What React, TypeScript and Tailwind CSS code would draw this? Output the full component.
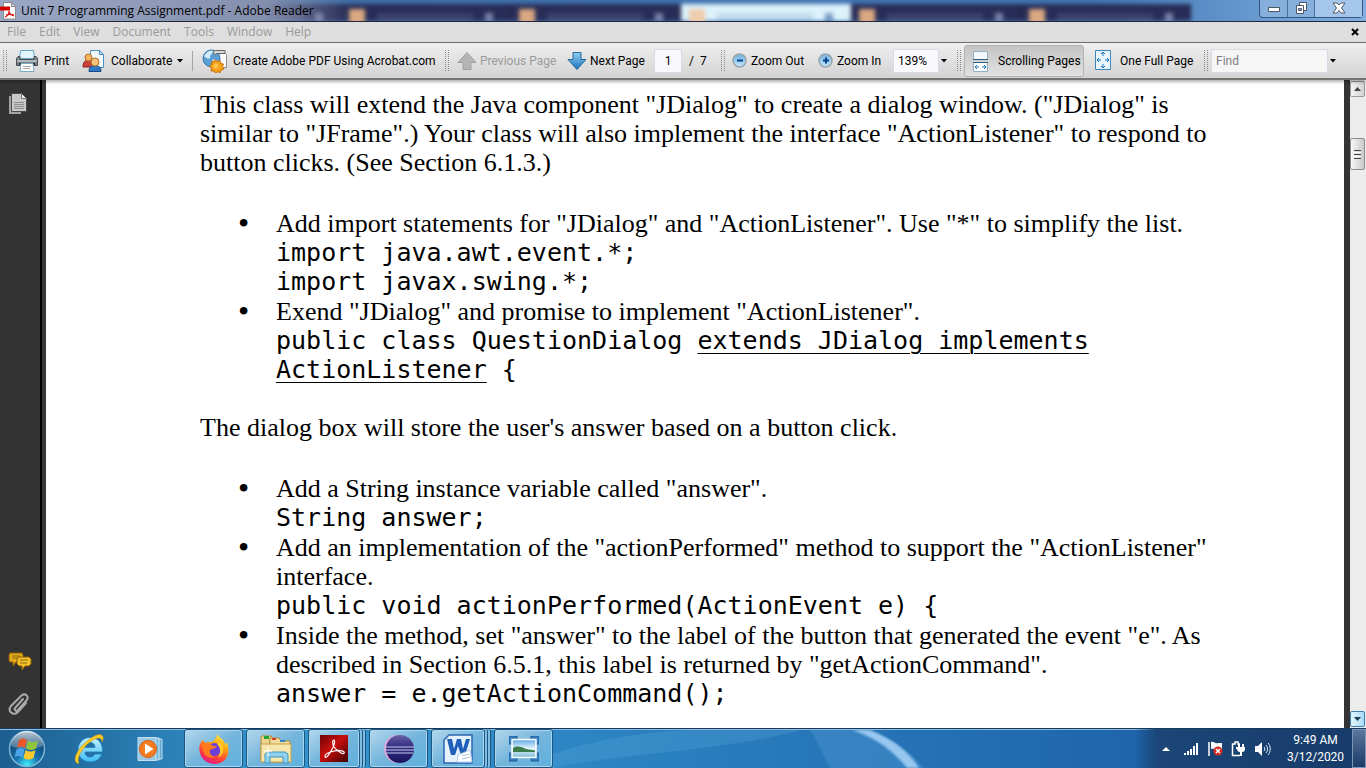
import type { ReactNode } from "react";

function Grip() {
  return (
    <svg width="4" height="22" className="shrink-0" aria-hidden="true">
      {Array.from({ length: 11 }, (_, i) => (
        <g key={i} fill="#8a8a8a">
          <rect x="0" y={i * 2} width="1" height="1" />
          <rect x="3" y={i * 2} width="1" height="1" />
        </g>
      ))}
    </svg>
  );
}

function Caret() {
  return (
    <svg width="6" height="4" className="shrink-0" aria-hidden="true">
      <path d="M0 0h6L3 3.5z" fill="#000" />
    </svg>
  );
}

function PdfIcon() {
  return (
    <svg width="16" height="18" viewBox="0 0 16 18" aria-hidden="true">
      <path d="M3.500.500h8l4 4v12.500h-12z" fill="#fff" stroke="#8a8a8a" />
      <path d="M11.500.500v4h4z" fill="#ddd" stroke="#8a8a8a" />
      <path d="M0 4.500h10v4H0z" fill="#d40000" />
      <path d="M5 15c3-1 4-4 4-6M9 9c0 3 2 4 5 5M6 13c3-1 5-1 8 0" fill="none" stroke="#e01010" strokeWidth="1.200" />
    </svg>
  );
}

function PrintIcon() {
  return (
    <svg width="24" height="24" viewBox="0 0 24 24" aria-hidden="true">
      <path d="M5.500 1.500h13l1 8h-15z" fill="#e3f5fc" stroke="#68a6bf" />
      <path d="M3 7.500h2v3h14v-3h2l1.500 2v7h-21v-7z" fill="#7b838a" stroke="#464c52" />
      <path d="M2 11h20v2H2z" fill="#b3babf" />
      <path d="M4 14h16v2H4z" fill="#22272b" />
      <path d="M6 14.500h12l1 8H5z" fill="#fff" stroke="#7babc4" />
      <path d="M8 17.500h8M8 19.500h7" stroke="#a5a5a5" />
    </svg>
  );
}

function CollaborateIcon() {
  return (
    <svg width="24" height="24" viewBox="0 0 24 24" aria-hidden="true">
      <path d="M8.500 1.500h9l4 4v13h-13z" fill="#f4fbff" stroke="#4b8fc0" />
      <path d="M17.500 1.500v4h4z" fill="#b9ddf1" stroke="#4b8fc0" />
      <path d="M1 18c0-5 2-7 6-7s6 2 6 7z" fill="#c9403a" stroke="#8c2320" />
      <circle cx="6.500" cy="8.500" r="3.500" fill="#f3b563" stroke="#b27020" />
      <path d="M7 22.500c0-4 2-6 6-6s6 2 6 6z" fill="#2f79c4" stroke="#174c8b" />
      <circle cx="13" cy="13" r="4" fill="#f6c37b" stroke="#b27020" />
    </svg>
  );
}

function CreatePdfIcon() {
  return (
    <svg width="26" height="24" viewBox="0 0 26 24" aria-hidden="true">
      <path d="M9.500 2.500h12l3 3v13h-15z" fill="#fafafa" stroke="#8d8d8d" />
      <circle cx="9.500" cy="9.500" r="8.500" fill="#5b9fd4" stroke="#3571a8" />
      <path d="M2 7c3-5 6-6 9-5 0 3-3 3-3 6s-3 2-6-1zM10 11c3-1 5 0 7 2l-5 5c-3-2-2-4-2-7z" fill="#d4ecf9" />
      <path d="M11 4c0-2 2-2.500 4-2.500h8v3h-8c-1 0-1 1-2 1z" fill="#d9d9d9" stroke="#666" />
      <path
        d="m13.500 10.500 1.800 2.300 2.700-1.200.6 2.900 2.900.5-1 2.500 1.500 2.500-3 .8-.5 2.700-2.700-.8-2.300 1.600-1.500-2.400-3 .1.500-2.900-2-2 2.300-1.800v-3h3z"
        fill="#f6a21a"
        stroke="#c66b08"
      />
      <circle cx="14" cy="17" r="2.500" fill="#fdc34a" />
    </svg>
  );
}

function ArrowIcon({ down = false }: { down?: boolean }) {
  return (
    <svg width="20" height="20" viewBox="0 0 20 20" aria-hidden="true">
      <defs>
        <linearGradient id="arrowBlue" x1="0" y1="0" x2="0" y2="1">
          <stop offset="0" stopColor="#8fcdf0" />
          <stop offset="1" stopColor="#1c72bb" />
        </linearGradient>
      </defs>
      {down ? (
        <path d="M6 1.500h8v7h5L10 18.500 1 8.500h5z" fill="url(#arrowBlue)" stroke="#27699f" />
      ) : (
        <path d="M6 18.500h8v-7h5L10 1.500 1 11.500h5z" fill="#b5b5b5" stroke="#a0a0a0" />
      )}
    </svg>
  );
}

function ZoomIcon({ plus = false }: { plus?: boolean }) {
  return (
    <svg width="16" height="16" viewBox="0 0 16 16" aria-hidden="true">
      <defs>
        <linearGradient id="lens" x1="0" y1="0" x2="0" y2="1">
          <stop offset="0" stopColor="#6fb2e0" />
          <stop offset="1" stopColor="#c4e9fb" />
        </linearGradient>
      </defs>
      <circle cx="7.500" cy="7.500" r="6.500" fill="url(#lens)" stroke="#9aa4ac" strokeWidth="1.500" />
      <path d={plus ? "M5 7.500h6M8 4.500v6" : "M5 7.500h6"} stroke="#07428b" strokeWidth="2" />
    </svg>
  );
}

function ScrollingIcon() {
  return (
    <svg width="18" height="22" viewBox="0 0 18 22" aria-hidden="true">
      <path d="M1.500 1.500h14v8h-14z" fill="#f2f8fc" stroke="#8fb0c6" />
      <path d="M1 9.500h15" stroke="#2f5d80" />
      <path d="M1.500 12.500h14v9h-14z" fill="#fff" stroke="#8fb0c6" />
      <path d="M1 12.500h15" stroke="#2f5d80" />
      <path d="M3 17h4M10 17h4M5 15l-2 2 2 2M12 15l2 2-2 2" fill="none" stroke="#1e79ba" />
    </svg>
  );
}

function FullPageIcon() {
  return (
    <svg width="17" height="21" viewBox="0 0 17 21" aria-hidden="true">
      <path d="M.500.500h15v19H.500z" fill="#e6f5fd" stroke="#3f86b5" />
      <path d="M8 2v4M6 4l2-2 2 2M8 18v-4M6 16l2 2 2-2M2 10h4M4 8l-2 2 2 2M14 10h-4M12 8l2 2-2 2" fill="none" stroke="#1873b6" />
    </svg>
  );
}

function PagesIcon() {
  return (
    <svg width="20" height="24" viewBox="0 0 20 24" aria-hidden="true">
      <path d="M1 4h12v18H1z" fill="#a3a3a3" />
      <path d="M3.500 1.500h10l5 5v13h-15z" fill="#c9c9c9" stroke="#4a4a4a" />
      <path d="M13.500 1.500v5h5z" fill="#eee" stroke="#777" />
      <path d="M6 10.500h10M6 12.500h10M6 14.500h10M6 16.500h10" stroke="#8c8c8c" />
    </svg>
  );
}

function CommentsIcon() {
  return (
    <svg width="24" height="20" viewBox="0 0 24 20" aria-hidden="true">
      <path d="M2 1h12l1 2v6l-1 1H8l-3 4v-4H2L1 9V3z" fill="#e6a91c" stroke="#8b5c08" />
      <path d="M4 4h8M4 6h6" stroke="#8b6a10" />
      <path d="M11 5h10l2 2v5l-2 2h-4l-3 4v-4h-3l-2-2V7z" fill="#f2c12b" stroke="#8b5c08" />
      <path d="M12 8h8M12 11h7" stroke="#8b6a10" />
    </svg>
  );
}

function ClipIcon() {
  return (
    <svg width="22" height="24" viewBox="0 0 22 24" aria-hidden="true">
      <path
        d="m15 7-8 9c-1 2 1 4 3 2l8.500-9.500c3-4-1-8-5-5L3 14c-4 5 2 10 6.500 6.500L18 11"
        fill="none"
        stroke="#aaa"
        strokeWidth="2"
        strokeLinecap="round"
      />
    </svg>
  );
}

function StartOrb() {
  return (
    <svg width="38" height="38" viewBox="0 0 38 38" aria-hidden="true">
      <defs>
        <radialGradient id="orb" cx=".5" cy=".95" r=".85">
          <stop offset="0" stopColor="#3ff0ff" />
          <stop offset=".4" stopColor="#1672ac" />
          <stop offset="1" stopColor="#123c67" />
        </radialGradient>
        <linearGradient id="orbShine" x1="0" y1="0" x2="0" y2="1">
          <stop offset="0" stopColor="#fff" stopOpacity=".75" />
          <stop offset="1" stopColor="#9bb8cc" stopOpacity=".35" />
        </linearGradient>
      </defs>
      <circle cx="19" cy="19" r="17.500" fill="url(#orb)" stroke="#7db4d4" strokeWidth="1.500" />
      <path d="M3 16a16 15 0 0 1 32 0c-9 4-23 4-32 0z" fill="url(#orbShine)" />
      <path d="M11 10c3-2 5-2 8 0l-2 8c-3-2-5-2-8 0z" fill="#e8562a" />
      <path d="M20 10.500c3 2 6 2 10 0l-2 8c-4 2-7 2-10 0z" fill="#8fc43c" />
      <path d="M8.500 19.500c3-2 5-2 8 0l-2 8c-3-2-5-2-8 0z" fill="#4aa3e6" />
      <path d="M17.500 20c3 2 6 2 10 0l-2 8c-4 2-7 2-10 0z" fill="#fcc92d" />
    </svg>
  );
}

function IeIcon() {
  return (
    <svg width="32" height="32" viewBox="0 0 32 32" aria-hidden="true">
      <defs>
        <linearGradient id="ie" x1="0" y1="0" x2="0" y2="1">
          <stop offset="0" stopColor="#c4f3ff" />
          <stop offset="1" stopColor="#3dbcf3" />
        </linearGradient>
      </defs>
      <path
        d="M17 4.500C10 4.500 5 10 5 17s5 12 12 12c6 0 10-3 12-8h-7c-1 2-3 3-5 3-3 0-5-2-5-5h17.500c.500-9-4.500-14.500-12.500-14.500zM12 14.500c0-3 2-5 5-5s5 2 5 5z"
        fill="url(#ie)"
        stroke="#1b7cba"
        strokeWidth=".8"
        fillRule="evenodd"
      />
      <path
        d="M6 30.500c-6 0-5-9 3-17.500S26-.500 29 2.500c2 1.500 1 4.500 0 6.500 0-5.500-5-5-12 0S3 24 6 30.500z"
        fill="#fbd02a"
        stroke="#c38d0c"
        strokeWidth=".6"
      />
    </svg>
  );
}

function PlayerIcon() {
  return (
    <svg width="28" height="26" viewBox="0 0 28 26" aria-hidden="true">
      <path d="M21 3h4v20h-4z" fill="#5fa9d6" stroke="#c3e2f2" />
      <path d="M18 2h4v22h-4z" fill="#6fb2da" stroke="#d5edf8" />
      <path d="M1 1.500h18v23H1z" fill="#9ac6e2" stroke="#c3e2f2" />
      <circle cx="11" cy="13" r="8.500" fill="#f47b1f" stroke="#d95d0b" />
      <path d="m8 7.500 8.500 5.500L8 18.500z" fill="#fff" />
    </svg>
  );
}

function FirefoxIcon() {
  return (
    <svg width="32" height="32" viewBox="0 0 32 32" aria-hidden="true">
      <defs>
        <linearGradient id="fox" x1=".8" y1="0" x2=".3" y2="1">
          <stop offset="0" stopColor="#fff44f" />
          <stop offset=".35" stopColor="#ffa70e" />
          <stop offset=".7" stopColor="#ff4139" />
          <stop offset="1" stopColor="#e31587" />
        </linearGradient>
      </defs>
      <path
        d="M20 1c1 3 2 4 4 5 2 2 3 4 3 6l2-3c3 9 2 21-12 22C6 31-1 21 2 11l3-5c0 2 1 3 2 4 2-1 4-1 7-1 2-1 4-4 6-8z"
        fill="url(#fox)"
      />
      <circle cx="16.500" cy="16.500" r="6.500" fill="#6e3fd8" />
      <path d="M4 10c4-1 8 0 11 3h4c-1 2-5 3-7 4-1 5 3 7 6 7-7 2-12-1-13-6-1-3-1-6-1-8z" fill="#ff7a1c" />
      <path d="M22 9c2 2 4 5 3 10-1 3-3 5-5 6 3-5 3-10-1-14z" fill="#ffcb2d" />
    </svg>
  );
}

function ExplorerIcon() {
  return (
    <svg width="34" height="30" viewBox="0 0 34 30" aria-hidden="true">
      <path d="M3 2h9l2 3h6v22H2V3z" fill="#ecd48a" stroke="#b08b34" />
      <path d="M5 2h5v3H5z" fill="#20a53a" />
      <path d="M11 4h9l2 3h9v21H10z" fill="#f3dd98" stroke="#b08b34" />
      <path d="M13 4h4v2h-4z" fill="#d0402b" />
      <path d="M21 6h5v2h-5z" fill="#2e83cf" />
      <path d="M2 10h30v18H2z" fill="#f8e7ac" stroke="#c2a04c" />
      <path d="M6 29v-9l3-2h17l3 2v9h-5v-6H11v6z" fill="#8fd0ef" stroke="#4496bf" />
      <path d="M9 13v9M5 17h8" stroke="#fff" />
    </svg>
  );
}

function AcrobatIcon() {
  return (
    <svg width="28" height="27" viewBox="0 0 28 27" aria-hidden="true">
      <defs>
        <linearGradient id="acro" x1="0" y1="0" x2="1" y2="1">
          <stop offset="0" stopColor="#6d0404" />
          <stop offset=".45" stopColor="#c90d0d" />
          <stop offset="1" stopColor="#3d0202" />
        </linearGradient>
      </defs>
      <path d="M0 0h28v27H0z" fill="url(#acro)" />
      <path
        d="M14 5c-2 0-1.500 4 0 7 2 3 5 5 8 6.500 2 .5 3-1 1.500-2-3-1.500-9-1-13 .500-3 1-5.500 3-5.500 4.500s2 1 3.500-1.500c2.500-4 5.500-8 6-12 0-2 0-3-.5-3z"
        fill="none"
        stroke="#fff"
        strokeWidth="1.200"
      />
    </svg>
  );
}

function EclipseIcon() {
  return (
    <svg width="32" height="30" viewBox="0 0 32 30" aria-hidden="true">
      <defs>
        <linearGradient id="ecl" x1="0" y1="0" x2="0" y2="1">
          <stop offset="0" stopColor="#6961a8" />
          <stop offset=".4" stopColor="#362e80" />
          <stop offset="1" stopColor="#1c1560" />
        </linearGradient>
      </defs>
      <circle cx="15" cy="15" r="14" fill="#e0a6d8" />
      <circle cx="17" cy="15" r="14" fill="url(#ecl)" />
      <path d="M2 13h29M2 16h29M3 19h27" stroke="#c5cdf0" strokeWidth="1" />
    </svg>
  );
}

function WordIcon() {
  return (
    <svg width="30" height="30" viewBox="0 0 30 30" aria-hidden="true">
      <path d="M6 1h23v28H1V6z" fill="#e4f0fb" stroke="#2b66b4" strokeWidth="1.500" />
      <path d="M4 5h5l2 10 3-10h4l2 10 3-10h4l-5 16h-4l-3-9-3 9H8z" fill="#1d5fb9" />
      <path d="m15 21 12-5 2 12H14z" fill="#fff" stroke="#b6cbe4" />
      <path d="m19 22 7-2M19 25l8-2" stroke="#a5bfe0" />
    </svg>
  );
}

function PictureIcon() {
  return (
    <svg width="30" height="26" viewBox="0 0 30 26" aria-hidden="true">
      <defs>
        <linearGradient id="sky" x1="0" y1="0" x2="0" y2="1">
          <stop offset="0" stopColor="#5ca9e8" />
          <stop offset=".5" stopColor="#e4f3fb" />
          <stop offset="1" stopColor="#7fbcd6" />
        </linearGradient>
      </defs>
      <path d="M0 0h8v3H3v5H0zM30 0h-8v3h5v5h3zM0 25h8v-3H3v-5H0zM30 25h-8v-3h5v-5h3z" fill="#3480c3" stroke="#1d5d97" />
      <path d="M3 3.500h24v18H3z" fill="url(#sky)" stroke="#fff" strokeWidth="1.500" />
      <path d="M4 12c4-3 9-1 13 1l9 1.500V16H4z" fill="#3b7d4a" />
    </svg>
  );
}

const tabs = [false, false, false, true, false, false];

function TitleBar() {
  return (
    <header className="relative flex h-[22px] shrink-0 items-center overflow-hidden border-b border-[#23263c] bg-gradient-to-r from-[#3f6ea5] via-[#4377b4] via-80% to-[#7fb0e0]">
      <div className="absolute inset-0 flex pt-1 blur-[2px]" aria-hidden="true">
        <div className="w-[171px] bg-[#2a3058]" />
        {tabs.map((active, i) => (
          <div
            key={i}
            className={
              active
                ? "flex w-[170px] items-center gap-3 bg-[#dcf2fb] px-2 pt-2"
                : "flex w-[170px] items-center gap-3 border-r border-[#1d2142] bg-[#282d57] px-2 pt-2"
            }
          >
            <span className={active ? "h-4 w-4 bg-[#f0cdae]" : "h-4 w-4 bg-[#d9a781]"} />
            <span className={active ? "h-2 w-24 bg-[#c3dcee]" : "h-2 w-24 bg-[#3b416b]"} />
            <span className={active ? "h-2 w-2 bg-[#7d9dc4]" : "h-2 w-2 bg-[#7b82a6]"} />
          </div>
        ))}
      </div>
      <div
        className="absolute inset-y-0 left-0 w-[350px] bg-gradient-to-r from-[#9aa7c4] via-[#8590ae] via-75% to-transparent"
        aria-hidden="true"
      />
      <div className="relative flex items-center gap-[5px]">
        <PdfIcon />
        <h1 className="text-xs whitespace-nowrap text-black">Unit 7 Programming Assignment.pdf - Adobe Reader</h1>
      </div>
      <div className="relative mr-[3px] mb-1 ml-auto flex h-[18px] rounded-b border border-t-0 border-[#33557f] bg-[#86afdb]">
        <button aria-label="Minimize" className="flex w-7 items-center justify-center border-r border-[#4a6f9c] pt-1">
          <svg width="12" height="6" aria-hidden="true">
            <path d="M.5.5h11v4H.5z" fill="#fff" stroke="#4b5666" />
          </svg>
        </button>
        <button aria-label="Restore" className="flex w-[27px] items-center justify-center border-r border-[#4a6f9c]">
          <svg width="13" height="12" viewBox="0 0 13 12" aria-hidden="true">
            <path d="M4.500.500h7v8h-7z" fill="#fff" stroke="#4b5666" />
            <path d="M1.500 3.500h7v8h-7z" fill="#fff" stroke="#4b5666" />
            <path d="M3.500 6.500h3v2h-3z" fill="#86afdb" stroke="#4b5666" />
          </svg>
        </button>
        <button aria-label="Close" className="flex w-[47px] items-center justify-center bg-[#a4c6ea]">
          <svg width="14" height="12" viewBox="0 0 14 12" aria-hidden="true">
            <path d="M1 1h4l2 2 2-2h4L9.500 6l3.500 5H9L7 8.500 5 11H1l3.500-5z" fill="#fff" stroke="#4b5666" />
          </svg>
        </button>
      </div>
    </header>
  );
}

function MenuBar() {
  return (
    <nav className="flex h-5 shrink-0 items-center gap-[13px] bg-[#dedede] pr-1 pl-[7px] text-xs text-[#9a9a9a]">
      <button>File</button>
      <button>Edit</button>
      <button>View</button>
      <button>Document</button>
      <button>Tools</button>
      <button>Window</button>
      <button>Help</button>
      <button aria-label="Close document" className="mr-[3px] ml-auto">
        <svg width="8" height="8" viewBox="0 0 8 8" aria-hidden="true">
          <path d="m1 1 6 6M7 1 1 7" stroke="#000" strokeWidth="2" />
        </svg>
      </button>
    </nav>
  );
}

function Tool({ icon, label, className }: { icon: ReactNode; label: string; className: string }) {
  return (
    <button className={`flex h-8 shrink-0 items-center whitespace-nowrap ${className}`}>
      {icon}
      {label}
    </button>
  );
}

function Toolbar() {
  return (
    <div className="z-10 flex h-[38px] shrink-0 items-center border-t border-b-2 border-t-[#6e6e6e] border-b-[#737373] bg-gradient-to-b from-[#efefef] to-[#d3d3d3] pl-[3px] font-[Roboto,sans-serif] text-xs text-black shadow-[0_2px_3px_rgba(0,0,0,0.3)]">
      <Grip />
      <Tool icon={<PrintIcon />} label="Print" className="ml-2 w-[67px] gap-[5px]" />
      <button className="flex h-8 w-[110px] shrink-0 items-center gap-[5px]">
        <CollaborateIcon />
        Collaborate
        <Caret />
      </button>
      <div className="h-5 w-px shrink-0 bg-[#a5a5a5]" />
      <Tool icon={<CreatePdfIcon />} label="Create Adobe PDF Using Acrobat.com" className="ml-[9px] w-[243px] gap-[5px]" />
      <Grip />
      <Tool icon={<ArrowIcon />} label="Previous Page" className="ml-2 w-[110px] gap-[3px] text-[#9b9b9b]" />
      <Tool icon={<ArrowIcon down />} label="Next Page" className="w-[87px] gap-[3px]" />
      <input
        aria-label="Page number"
        defaultValue="1"
        className="h-6 w-7 shrink-0 border border-[#d8dbe6] bg-[#f9f9fb] text-center"
      />
      <span className="ml-[7px] w-[32px] shrink-0 whitespace-pre">/  7</span>
      <Grip />
      <Tool icon={<ZoomIcon />} label="Zoom Out" className="ml-[7px] w-[86px] gap-[3px]" />
      <Tool icon={<ZoomIcon plus />} label="Zoom In" className="w-[75px] gap-[3px]" />
      <input
        aria-label="Zoom level"
        defaultValue="139%"
        className="h-6 w-[46px] shrink-0 border border-[#d8dbe6] bg-[#f9f9fb] pl-1"
      />
      <button aria-label="Zoom presets" className="flex h-6 w-[18px] shrink-0 items-center pl-[2px]">
        <Caret />
      </button>
      <Grip />
      <Tool
        icon={<ScrollingIcon />}
        label="Scrolling Pages"
        className="ml-[3px] w-[120px] gap-2 rounded-[3px] border border-[#b2b2b2] bg-gradient-to-b from-[#c4c4c4] to-[#e2e2e2] pl-[7px]"
      />
      <Tool icon={<FullPageIcon />} label="One Full Page" className="ml-[11px] w-[109px] gap-2" />
      <Grip />
      <input
        aria-label="Find"
        placeholder="Find"
        className="ml-[3px] h-6 w-[117px] shrink-0 border border-[#d8dbe6] bg-[#f6f6f6] pl-1 placeholder:text-[#7c7c7c]"
      />
      <button aria-label="Find options" className="flex h-6 w-3 shrink-0 items-center pl-[2px]">
        <Caret />
      </button>
    </div>
  );
}

function Sidebar() {
  return (
    <aside className="flex w-[46px] shrink-0 border-r-4 border-[#383838] bg-[#333]">
      <div className="flex flex-1 flex-col items-start border-r-2 border-black pt-3 pb-3 pl-2">
        <button aria-label="Pages">
          <PagesIcon />
        </button>
        <button aria-label="Comments" className="mt-auto">
          <CommentsIcon />
        </button>
        <button aria-label="Attachments" className="mt-5">
          <ClipIcon />
        </button>
      </div>
    </aside>
  );
}

function Code({ children }: { children: ReactNode }) {
  return (
    <code className="block h-[29px] font-['DejaVu_Sans_Mono',monospace] text-[25px] leading-[29px]">{children}</code>
  );
}

function Item({ children }: { children: ReactNode }) {
  return (
    <li className="flex">
      <span className="w-[38px] shrink-0 text-[32px]" aria-hidden="true">
        •
      </span>
      <div>{children}</div>
    </li>
  );
}

function Page() {
  return (
    <main className="flex-1 overflow-hidden bg-white pt-[10px] pl-[154px] font-['Liberation_Serif',serif] text-[26px] leading-[29px] whitespace-nowrap text-black">
      <p>
        This class will extend the Java component "JDialog" to create a dialog window. ("JDialog" is
        <br />
        similar to "JFrame".) Your class will also implement the interface "ActionListener" to respond to
        <br />
        button clicks. (See Section 6.1.3.)
      </p>
      <ul className="mt-8 flex flex-col gap-px pl-[38px]">
        <Item>
          Add import statements for "JDialog" and "ActionListener". Use "*" to simplify the list.
          <Code>import java.awt.event.*;</Code>
          <Code>import javax.swing.*;</Code>
        </Item>
        <Item>
          Exend "JDialog" and promise to implement "ActionListener".
          <Code>
            public class QuestionDialog <u className="decoration-1 underline-offset-4">extends JDialog implements</u>
          </Code>
          <Code>
            <u className="decoration-1 underline-offset-4">ActionListener</u>
            {" {"}
          </Code>
        </Item>
      </ul>
      <p className="mt-[29px]">The dialog box will store the user's answer based on a button click.</p>
      <ul className="mt-8 flex flex-col gap-px pl-[38px]">
        <Item>
          Add a String instance variable called "answer".
          <Code>String answer;</Code>
        </Item>
        <Item>
          Add an implementation of the "actionPerformed" method to support the "ActionListener"
          <br />
          interface.
          <Code>{"public void actionPerformed(ActionEvent e) {"}</Code>
        </Item>
        <Item>
          Inside the method, set "answer" to the label of the button that generated the event "e". As
          <br />
          described in Section 6.5.1, this label is returned by "getActionCommand".
          <Code>answer = e.getActionCommand();</Code>
        </Item>
      </ul>
    </main>
  );
}

function ScrollBar() {
  return (
    <div className="flex w-[22px] shrink-0 flex-col border-l-6 border-[#333] bg-[#ececec] pt-px">
      <button
        aria-label="Scroll up"
        className="flex h-4 w-[15px] items-center justify-center rounded-[2px] border border-[#9a9a9a] bg-gradient-to-r from-[#f5f5f5] to-[#d2d2d2]"
      >
        <svg width="7" height="4" aria-hidden="true">
          <path d="M0 4h7L3.500 0z" fill="#444" />
        </svg>
      </button>
      <div className="mt-[41px] flex h-8 w-[15px] flex-col items-center justify-center gap-px rounded-[2px] border border-[#8e8e8e] bg-gradient-to-r from-[#f7f7f7] to-[#c9c9c9]">
        <span className="h-px w-[7px] bg-[#444]" />
        <span className="h-px w-[7px] bg-white" />
        <span className="h-px w-[7px] bg-[#444]" />
        <span className="h-px w-[7px] bg-white" />
        <span className="h-px w-[7px] bg-[#444]" />
      </div>
      <button
        aria-label="Scroll down"
        className="mt-auto mb-px flex h-4 w-[15px] items-center justify-center rounded-[2px] border border-[#3c7fb1] bg-gradient-to-r from-[#e3f4fc] to-[#a9dbf5]"
      >
        <svg width="7" height="4" aria-hidden="true">
          <path d="M0 0h7L3.500 4z" fill="#1c3c55" />
        </svg>
      </button>
    </div>
  );
}

function TaskButton({ label, width, stacked, children }: { label: string; width: string; stacked?: boolean; children: ReactNode }) {
  return (
    <div className="flex h-full">
      <button
        aria-label={label}
        className={`flex h-full items-center justify-center rounded-[3px] border border-[#1d5680] bg-gradient-to-br from-[#b3d7ec] via-[#74b5dc] to-[#5fb0de] shadow-[inset_0_0_0_1px_#a9d6ee] ${width}`}
      >
        {children}
      </button>
      {stacked && (
        <>
          <span className="w-[3px] rounded-r-[3px] border-r border-[#1d5680] bg-[#7fbde2]" />
          <span className="w-[3px] rounded-r-[3px] border-r border-[#1d5680] bg-[#7fbde2]" />
        </>
      )}
    </div>
  );
}

function Tray() {
  return (
    <div className="flex h-full items-center bg-gradient-to-r from-transparent via-[#1b4677] via-10% to-[#173b69] pl-7 text-white">
      <button aria-label="Show hidden icons" className="mr-[14px]">
        <svg width="8" height="4" aria-hidden="true">
          <path d="M0 4h8L4 0z" fill="#fff" />
        </svg>
      </button>
      <button aria-label="Network" className="mr-[9px]">
        <svg width="15" height="12" viewBox="0 0 15 12" aria-hidden="true">
          <path d="M0 10h2v2H0zM3 8h2v4H3zM6 6h2v6H6zM9 3h2v9H9zM12 0h2v12h-2z" fill="#fff" />
        </svg>
      </button>
      <button aria-label="Action Center" className="mr-2">
        <svg width="15" height="15" viewBox="0 0 15 15" aria-hidden="true">
          <path d="M1 1v14" stroke="#fff" strokeWidth="1.500" />
          <path d="M3 1c3-1 4 2 7 1h4v6c-4 1-7-1-11 0z" fill="#fff" />
          <circle cx="10" cy="10" r="4.500" fill="#d92b20" />
          <path d="m8 8 4 4M12 8l-4 4" stroke="#fff" strokeWidth="1.500" />
        </svg>
      </button>
      <button aria-label="Power" className="mr-[9px]">
        <svg width="15" height="16" viewBox="0 0 15 16" aria-hidden="true">
          <path d="M9 3H7V1H4v2H1.500v11.500H9" fill="none" stroke="#fff" strokeWidth="1.500" />
          <path d="M5 6h9v2c0 2-1 3-3 3v4H9v-4c-2 0-3-1-3-3H5zM7 3h2v3H7zM11 3h2v3h-2z" fill="#fff" />
        </svg>
      </button>
      <button aria-label="Volume" className="mr-4">
        <svg width="16" height="14" viewBox="0 0 16 14" aria-hidden="true">
          <path d="M0 4h3l4-4v14l-4-4H0z" fill="#fff" />
          <path d="M9 5c1 1 1 3 0 4M11 3c2 2 2 6 0 8M13 1c3 3 3 9 0 12" fill="none" stroke="#dce8f4" />
        </svg>
      </button>
      <button className="w-[57px] text-center font-[Roboto,sans-serif] text-xs leading-[17px]">
        9:49 AM
        <br />
        3/12/2020
      </button>
      <button
        aria-label="Show desktop"
        className="ml-2 h-full w-[14px] border border-[#7d95b5] bg-gradient-to-b from-[#5c779e] to-[#1c3b68]"
      />
    </div>
  );
}

function TaskBar() {
  return (
    <footer className="flex h-10 shrink-0 items-center overflow-hidden border-t border-[#17395c] bg-gradient-to-r from-[#1c5f91] via-[#3596cf] via-20% to-[#1a58a2] shadow-[inset_0_1px_0_#8fbde2]">
      <button aria-label="Start" className="ml-2">
        <StartOrb />
      </button>
      <button aria-label="Internet Explorer" className="ml-[27px]">
        <IeIcon />
      </button>
      <button aria-label="Media Player" className="mr-[19px] ml-8">
        <PlayerIcon />
      </button>
      <div className="flex h-full gap-[3px]">
        <TaskButton label="Firefox" width="w-[59px]">
          <FirefoxIcon />
        </TaskButton>
        <TaskButton label="Windows Explorer" width="w-[59px]">
          <ExplorerIcon />
        </TaskButton>
        <TaskButton label="Adobe Reader" width="w-[52px]" stacked>
          <AcrobatIcon />
        </TaskButton>
        <TaskButton label="Eclipse" width="w-[59px]">
          <EclipseIcon />
        </TaskButton>
        <TaskButton label="Word" width="w-[54px]" stacked>
          <WordIcon />
        </TaskButton>
        <TaskButton label="Photo Viewer" width="w-[59px]">
          <PictureIcon />
        </TaskButton>
      </div>
      <svg viewBox="0 0 587 38" preserveAspectRatio="none" className="h-[38px] min-w-0 flex-1" aria-hidden="true">
        <path d="M0 24C40 10 90 2 140 0h110C180 20 80 22 0 38z" fill="#6db8e4" opacity=".2" />
        <path d="M260 0h60c25 10 45 25 55 38h-95z" fill="#5a9fd8" opacity=".35" />
        <path d="M302 0h18c22 8 40 22 50 38h-12c-14-16-30-30-56-38z" fill="#b0d8fb" opacity=".8" className="blur-[1px]" />
      </svg>
      <Tray />
    </footer>
  );
}

export default function App() {
  return (
    <div className="flex h-screen flex-col overflow-hidden font-['Open_Sans',sans-serif]">
      <TitleBar />
      <MenuBar />
      <Toolbar />
      <div className="flex min-h-0 flex-1">
        <Sidebar />
        <Page />
        <ScrollBar />
      </div>
      <TaskBar />
    </div>
  );
}
